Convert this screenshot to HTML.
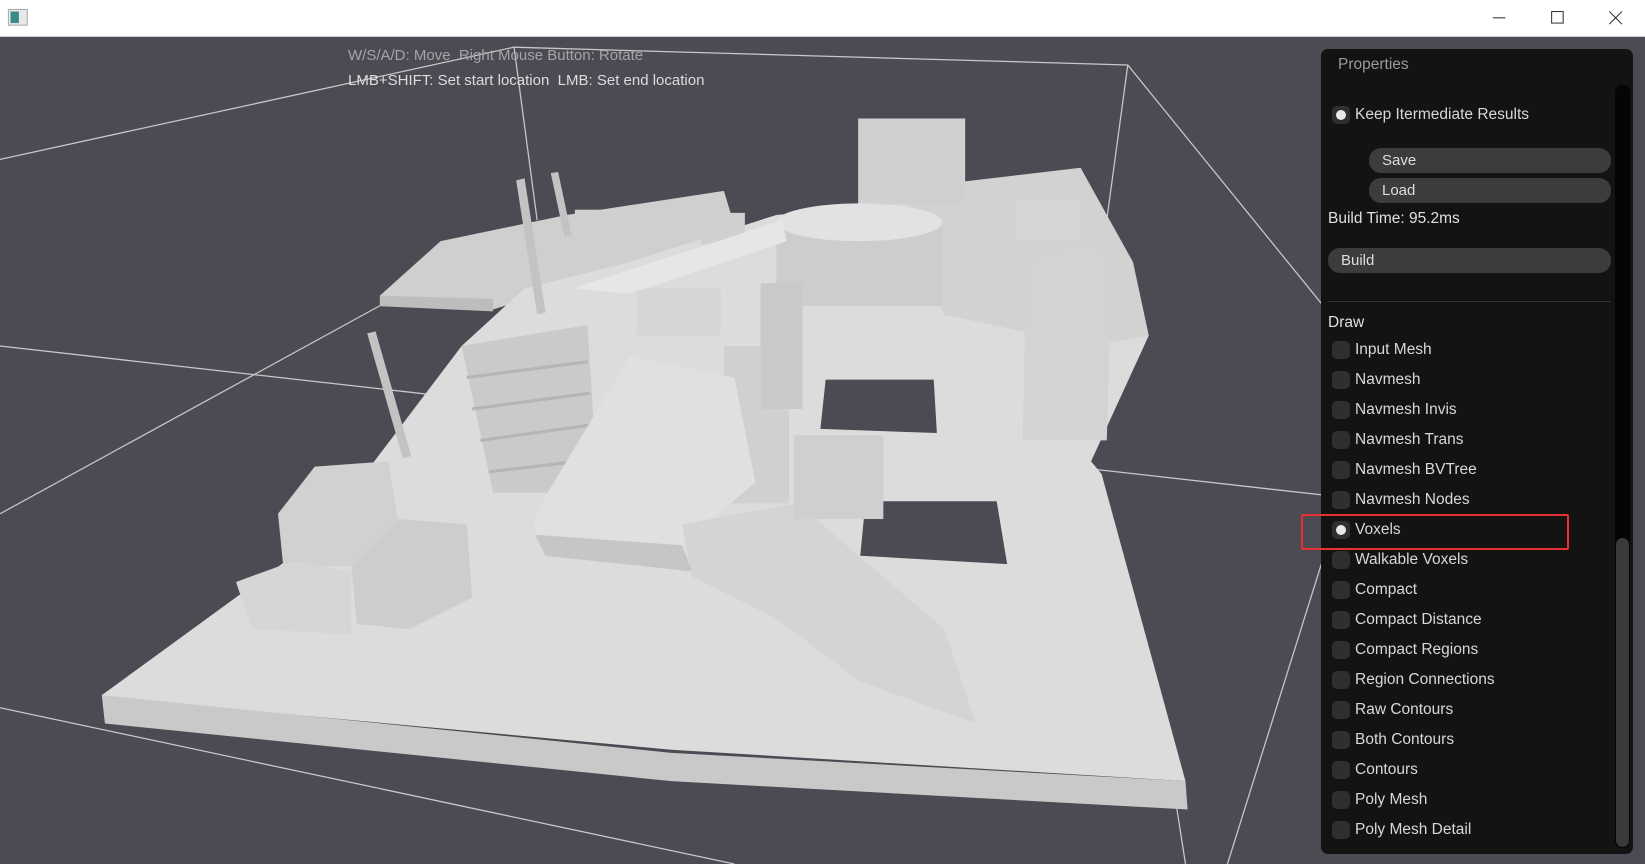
<!DOCTYPE html>
<html><head><meta charset="utf-8"><style>
*{margin:0;padding:0;box-sizing:border-box}
body{width:1645px;height:864px;overflow:hidden;background:#4c4b53;font-family:"Liberation Sans","DejaVu Sans",sans-serif;position:relative}
.t{position:absolute;white-space:nowrap}
#panel{position:absolute;left:1321px;top:49px;width:312px;height:805px;background:#131313;border-radius:7px}
.btn{position:absolute;background:#3c3c3c;border-radius:12px;height:25px;color:#ddd;font-size:15px;line-height:25px;padding-left:13px;white-space:nowrap}
.row{position:absolute;left:11px;width:280px;height:22px;font-size:15.5px;color:#d8d8d8;line-height:22px;white-space:nowrap}
.cb{position:absolute;left:0;top:2px;width:18px;height:18px;border-radius:5px;background:#2f2f2f}
.cb.on::after{content:"";position:absolute;left:4px;top:4px;width:10px;height:10px;border-radius:50%;background:#e8e8e8}
.row span{position:absolute;left:23px;top:0;white-space:nowrap}
</style></head><body>
<svg width="1645" height="864" viewBox="0 0 1568 824" preserveAspectRatio="none" style="position:absolute;left:0;top:0">
<rect x="0" y="0" width="1568" height="35" fill="#fff"/>
<g stroke="#c8c8c8" stroke-width="1.2" fill="none">
<polyline points="0,152 490,45 1075,62 1260,290"/>
<line x1="1075" y1="62" x2="1040" y2="320"/>
<line x1="490" y1="45" x2="512" y2="210"/>
<line x1="0" y1="330" x2="1260" y2="472"/>
<line x1="0" y1="490" x2="365" y2="290"/>
<line x1="0" y1="675" x2="700" y2="824"/>
<line x1="1120" y1="760" x2="1130" y2="824"/>
<line x1="1170" y1="824" x2="1262" y2="530"/>
</g>
<polygon points="362,282 420,230 540,205 690,182 700,215 640,250 520,280 470,295 365,292" fill="#cfcfcf"/>
<polygon points="362,282 470,285 470,297 362,292" fill="#bdbdbd"/>
<polygon points="97,663 300,515 440,330 500,275 600,250 740,205 900,190 1030,180 1095,320 1040,440 1050,452 1115,690 1130,745 640,715 100,665" fill="#dcdcdc"/>
<polygon points="97,663 640,718 1130,745 1132,772 640,745 100,690" fill="#c9c9c9"/>
<polygon points="860,180 1030,160 1080,250 1095,320 1040,330 900,300" fill="#d2d2d2"/>
<polygon points="787,362 890,362 893,413 782,409" fill="#4c4b53"/>
<polygon points="825,478 950,478 960,538 820,530" fill="#4c4b53"/>
<rect x="818" y="113" width="102" height="82" fill="#d0d0d0"/>
<rect x="740" y="212" width="158" height="80" fill="#cdcdcd"/>
<ellipse cx="819" cy="212" rx="79" ry="18" fill="#e2e2e2"/>
<polygon points="990,240 1035,232 1060,245 1055,420 975,420 978,250" fill="#d3d3d3"/>
<rect x="690" y="330" width="62" height="150" fill="#d0d0d0"/>
<rect x="725" y="270" width="40" height="120" fill="#c9c9c9"/>
<polygon points="440,330 560,310 570,470 470,470" fill="#cacaca"/>
<g stroke="#b5b5b5" stroke-width="3"><line x1="445" y1="360" x2="560" y2="345"/><line x1="450" y1="390" x2="562" y2="375"/><line x1="458" y1="420" x2="565" y2="405"/><line x1="466" y1="450" x2="568" y2="438"/></g>
<polygon points="510,490 600,340 700,360 720,460 650,520 510,510" fill="#e0e0e0"/>
<polygon points="510,510 650,520 660,545 520,530" fill="#c6c6c6"/>
<polygon points="650,500 760,480 830,540 900,600 930,690 820,650 740,590 660,550" fill="#d4d4d4"/>
<polygon points="265,490 300,445 370,440 380,500 340,540 270,540" fill="#d1d1d1"/>
<polygon points="335,540 380,495 445,500 450,570 390,600 340,595" fill="#cdcdcd"/>
<polygon points="225,555 280,535 335,545 335,605 240,600" fill="#d6d6d6"/>
<rect x="548" y="200" width="45" height="30" fill="#d0d0d0"/>
<rect x="668" y="203" width="42" height="30" fill="#d0d0d0"/>
<rect x="968" y="190" width="62" height="40" fill="#d6d6d6"/>
<rect x="607" y="275" width="80" height="45" fill="#d6d6d6"/>
<rect x="757" y="415" width="85" height="80" fill="#cfcfcf"/>
<polygon points="492,172 500,170 520,298 512,300" fill="#c3c3c3"/>
<polygon points="525,165 532,164 545,225 538,226" fill="#c3c3c3"/>
<polygon points="350,318 358,316 392,435 384,437" fill="#c3c3c3"/>
<polygon points="545,275 700,225 745,210 750,230 600,280" fill="#e6e6e6"/>
<rect x="8" y="9" width="18" height="15" fill="#e8e8e8" stroke="#aaa"/>
<rect x="10" y="11" width="8" height="11" fill="#3a8a8a"/>
<g stroke="#333" stroke-width="1" fill="none"><line x1="1423" y1="17" x2="1435" y2="17"/><rect x="1479" y="11" width="11" height="11"/><line x1="1534" y1="11" x2="1546" y2="23"/><line x1="1546" y1="11" x2="1534" y2="23"/></g>
</svg>
<div class="t" style="left:348px;top:47px;font-size:15px;color:#a4a4a8">W/S/A/D: Move&nbsp; Right Mouse Button: Rotate</div>
<div class="t" style="left:348px;top:72px;font-size:15px;color:#dcdcdc">LMB+SHIFT: Set start location&nbsp; LMB: Set end location</div>
<div id="panel">
<div class="t" style="left:17px;top:7px;font-size:15.5px;color:#9a9a9a">Properties</div>
<div style="position:absolute;left:294px;top:36px;width:15px;height:763px;background:#050505;border-radius:7px"></div>
<div style="position:absolute;left:295px;top:489px;width:13px;height:309px;background:#3a3a3a;border-radius:7px"></div>
<div class="row" style="top:55px"><div class="cb on"></div><span>Keep Itermediate Results</span></div>
<div class="btn" style="left:48px;top:99px;width:242px">Save</div>
<div class="btn" style="left:48px;top:129px;width:242px">Load</div>
<div class="t" style="left:7px;top:161px;font-size:15.5px;color:#e0e0e0">Build Time: 95.2ms</div>
<div class="btn" style="left:7px;top:199px;width:283px">Build</div>
<div style="position:absolute;left:7px;top:252px;width:283px;height:1px;background:#333"></div>
<div class="t" style="left:7px;top:265px;font-size:15.5px;color:#e0e0e0">Draw</div>
<div class="row" style="top:290px"><div class="cb"></div><span>Input Mesh</span></div>
<div class="row" style="top:320px"><div class="cb"></div><span>Navmesh</span></div>
<div class="row" style="top:350px"><div class="cb"></div><span>Navmesh Invis</span></div>
<div class="row" style="top:380px"><div class="cb"></div><span>Navmesh Trans</span></div>
<div class="row" style="top:410px"><div class="cb"></div><span>Navmesh BVTree</span></div>
<div class="row" style="top:440px"><div class="cb"></div><span>Navmesh Nodes</span></div>
<div class="row" style="top:470px"><div class="cb on"></div><span>Voxels</span></div>
<div class="row" style="top:500px"><div class="cb"></div><span>Walkable Voxels</span></div>
<div class="row" style="top:530px"><div class="cb"></div><span>Compact</span></div>
<div class="row" style="top:560px"><div class="cb"></div><span>Compact Distance</span></div>
<div class="row" style="top:590px"><div class="cb"></div><span>Compact Regions</span></div>
<div class="row" style="top:620px"><div class="cb"></div><span>Region Connections</span></div>
<div class="row" style="top:650px"><div class="cb"></div><span>Raw Contours</span></div>
<div class="row" style="top:680px"><div class="cb"></div><span>Both Contours</span></div>
<div class="row" style="top:710px"><div class="cb"></div><span>Contours</span></div>
<div class="row" style="top:740px"><div class="cb"></div><span>Poly Mesh</span></div>
<div class="row" style="top:770px"><div class="cb"></div><span>Poly Mesh Detail</span></div>
</div>
<div style="position:absolute;left:1301px;top:514px;width:268px;height:36px;border:2px solid #e83030;border-radius:2px"></div>
</body></html>
